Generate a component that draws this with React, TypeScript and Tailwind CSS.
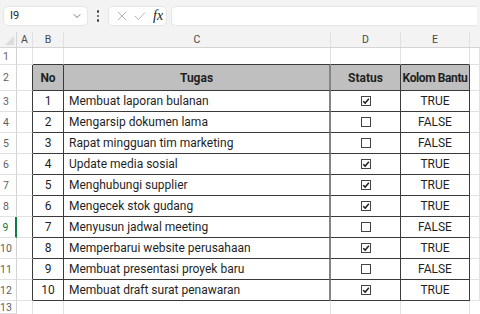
import { ChevronDown } from "lucide-react";

type Task = { no: number; tugas: string; done: boolean };

const tasks: Task[] = [
  { no: 1, tugas: "Membuat laporan bulanan", done: true },
  { no: 2, tugas: "Mengarsip dokumen lama", done: false },
  { no: 3, tugas: "Rapat mingguan tim marketing", done: false },
  { no: 4, tugas: "Update media sosial", done: true },
  { no: 5, tugas: "Menghubungi supplier", done: true },
  { no: 6, tugas: "Mengecek stok gudang", done: true },
  { no: 7, tugas: "Menyusun jadwal meeting", done: false },
  { no: 8, tugas: "Memperbarui website perusahaan", done: true },
  { no: 9, tugas: "Membuat presentasi proyek baru", done: false },
  { no: 10, tugas: "Membuat draft surat penawaran", done: true },
];

const grid = "border-r border-b border-r-[#e1e1e1] border-b-[#e1e1e1]";

function RowNum({ n, active = false, top = false }: { n: number; active?: boolean; top?: boolean }) {
  return (
    <div
      className={`w-[17px] shrink-0 flex justify-center pr-[4px] text-[10.5px] leading-[13px] border-b border-b-[#e1e1e1] ${
        top ? "items-start" : "items-center"
      } ${active ? "text-[#107c41] border-r-2 border-r-[#107c41]" : "text-[#5f5f5f] border-r border-r-[#d4d4d4]"}`}
    >
      {n}
    </div>
  );
}

function Checkbox({ checked }: { checked: boolean }) {
  return (
    <span className="w-[10px] h-[10px] border-[1.5px] border-[#444] bg-white flex items-center justify-center">
      {checked ? (
        <svg viewBox="0 0 10 10" className="w-[8px] h-[8px]">
          <path d="M1.5 5.2 L4 7.6 L8.6 2.2" fill="none" stroke="#1f1f1f" strokeWidth="1.8" />
        </svg>
      ) : null}
    </span>
  );
}

function Toolbar() {
  return (
    <div className="h-[32px] bg-[#f3f3f3] flex items-center px-[3px] gap-[4px]">
      <div className="w-[85px] h-[20px] bg-white rounded-[5px] border border-[#e6e6e6] flex items-center justify-between pl-[6px] pr-[4px]">
        <span className="text-[11px] text-[#222]">I9</span>
        <ChevronDown size={12} strokeWidth={1.6} className="text-[#555]" />
      </div>
      <div className="w-[12px] flex flex-col items-center gap-[2px]">
        <span className="w-[2.5px] h-[2.5px] rounded-full bg-[#444]" />
        <span className="w-[2.5px] h-[2.5px] rounded-full bg-[#444]" />
        <span className="w-[2.5px] h-[2.5px] rounded-full bg-[#444]" />
      </div>
      <div className="w-[59px] h-[20px] bg-white rounded-[5px] border border-[#e6e6e6] flex items-center pl-[8px] gap-[7px]">
        <svg viewBox="0 0 10 10" className="w-[10px] h-[10px]">
          <path d="M1 1 L9 9 M9 1 L1 9" stroke="#b5b5b5" strokeWidth="1" fill="none" />
        </svg>
        <svg viewBox="0 0 12 10" className="w-[12px] h-[10px]">
          <path d="M1 5 L4.5 8.5 L11 1.5" stroke="#b5b5b5" strokeWidth="1" fill="none" />
        </svg>
        <span className="text-[14px] italic text-[#222] leading-none" style={{ fontFamily: '"Liberation Serif", serif' }}>
          fx
        </span>
      </div>
      <div className="flex-1 h-[20px] bg-white rounded-l-[5px] border border-r-0 border-[#e6e6e6]" />
    </div>
  );
}

function ColHeaders() {
  const cols: [string, string][] = [
    ["A", "w-[16px]"],
    ["B", "w-[31px]"],
    ["C", "w-[267px]"],
    ["D", "w-[70px]"],
    ["E", "w-[69px]"],
  ];
  return (
    <div className="h-[16px] flex bg-[#f3f3f3] border-b border-b-[#d4d4d4]">
      <div className="w-[17px] shrink-0 border-r border-r-[#d4d4d4] relative">
        <svg viewBox="0 0 10 10" className="absolute right-[2px] bottom-[2px] w-[9px] h-[9px]">
          <path d="M10 0 L10 10 L0 10 Z" fill="#dcdcdc" />
        </svg>
      </div>
      {cols.map(([l, w]) => (
        <div key={l} className={`${w} shrink-0 border-r border-r-[#e1e1e1] flex items-center justify-center text-[10.5px] text-[#4a4a4a]`}>
          {l}
        </div>
      ))}
      <div className="flex-1" />
    </div>
  );
}

export default function App() {
  return (
    <div className="w-[480px] h-[314px] overflow-hidden bg-white text-[#1f1f1f]" style={{ fontFamily: "Roboto, 'Noto Sans', sans-serif" }}>
      <Toolbar />
      <ColHeaders />

      {/* row 1 */}
      <div className="h-[17px] flex">
        <RowNum n={1} />
        <div className={`w-[16px] shrink-0 ${grid}`} />
        <div className="w-[31px] shrink-0 border-r border-r-[#e1e1e1] border-b border-b-[#3a3a3a]" />
        <div className="w-[267px] shrink-0 border-r border-r-[#e1e1e1] border-b border-b-[#3a3a3a]" />
        <div className="w-[70px] shrink-0 border-r border-r-[#e1e1e1] border-b border-b-[#3a3a3a]" />
        <div className="w-[69px] shrink-0 border-r border-r-[#e1e1e1] border-b border-b-[#3a3a3a]" />
        <div className={`flex-1 ${grid}`} />
      </div>

      {/* row 2: header */}
      <div className="h-[26px] flex">
        <RowNum n={2} />
        <div className="w-[16px] shrink-0 border-r border-r-[#3a3a3a] border-b border-b-[#e1e1e1]" />
        <div className="w-[31px] shrink-0 bg-[#bfbfbf] border-r border-b border-[#3a3a3a] flex items-end justify-center pb-[3px] text-[12px] font-bold">
          No
        </div>
        <div className="w-[267px] shrink-0 bg-[#bfbfbf] border-r-2 border-r-[#858585] border-b border-b-[#3a3a3a] flex items-end justify-center pb-[3px] text-[12px] font-bold">
          Tugas
        </div>
        <div className="w-[70px] shrink-0 bg-[#bfbfbf] border-r border-b border-[#3a3a3a] flex items-end justify-center pb-[3px] text-[12px] font-bold">
          Status
        </div>
        <div className="w-[69px] shrink-0 bg-[#bfbfbf] border-r border-b border-[#3a3a3a] flex items-end justify-center pb-[3px] text-[12px] font-bold tracking-[-0.4px] whitespace-nowrap">
          Kolom Bantu
        </div>
        <div className={`flex-1 ${grid}`} />
      </div>

      {tasks.map((t, i) => (
        <div key={t.no} className="h-[21px] flex">
          <RowNum n={i + 3} active={i + 3 === 9} />
          <div className="w-[16px] shrink-0 border-r border-r-[#3a3a3a] border-b border-b-[#e1e1e1]" />
          <div className="w-[31px] shrink-0 border-r border-b border-[#3a3a3a] flex items-center justify-center text-[12px]">
            {t.no}
          </div>
          <div className="w-[267px] shrink-0 border-r-2 border-r-[#858585] border-b border-b-[#3a3a3a] flex items-center pl-[5px] text-[12px] whitespace-nowrap">
            {t.tugas}
          </div>
          <div className="w-[70px] shrink-0 border-r border-b border-[#3a3a3a] flex items-center justify-center">
            <Checkbox checked={t.done} />
          </div>
          <div className="w-[69px] shrink-0 border-r border-b border-[#3a3a3a] flex items-center justify-center text-[12px]">
            {t.done ? "TRUE" : "FALSE"}
          </div>
          <div className={`flex-1 ${grid}`} />
        </div>
      ))}

      {/* row 13 */}
      <div className="h-[13px] flex">
        <RowNum n={13} top />
        <div className="w-[16px] shrink-0 border-r border-r-[#e1e1e1]" />
        <div className="w-[31px] shrink-0 border-r border-r-[#e1e1e1]" />
        <div className="w-[267px] shrink-0 border-r border-r-[#e1e1e1]" />
        <div className="w-[70px] shrink-0 border-r border-r-[#e1e1e1]" />
        <div className="w-[69px] shrink-0 border-r border-r-[#e1e1e1]" />
        <div className="flex-1" />
      </div>
    </div>
  );
}
